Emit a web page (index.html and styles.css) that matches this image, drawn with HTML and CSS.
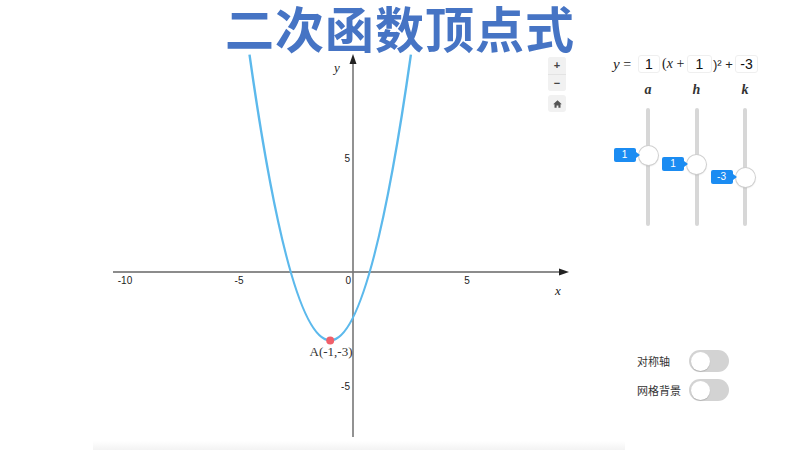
FILE: index.html
```html
<!DOCTYPE html>
<html lang="zh">
<head>
<meta charset="utf-8">
<title>二次函数顶点式</title>
<link rel="stylesheet" href="styles.css">
</head>
<body>
<h1 class="title">二次函数顶点式</h1>
<div class="main">
  <div class="graph">
    <svg class="plot" width="625" height="398" viewBox="0 0 625 398">
      <defs>
        <linearGradient id="strip" x1="0" y1="0" x2="0" y2="1">
          <stop offset="0" stop-color="#ffffff"/>
          <stop offset="1" stop-color="#f3f3f3"/>
        </linearGradient>
      </defs>
      <rect x="93" y="389" width="532" height="9" fill="url(#strip)"/>
      <!-- x axis -->
      <line x1="113" y1="220" x2="561" y2="220" stroke="#666" stroke-width="1.6"/>
      <polygon points="569,220 559,216.5 559,223.5" fill="#222"/>
      <!-- y axis -->
      <line x1="353" y1="385" x2="353" y2="10" stroke="#777" stroke-width="1.6"/>
      <polygon points="353,2 349.5,12 356.5,12" fill="#222"/>
      <!-- labels -->
      <g class="tick">
        <text x="125" y="232" text-anchor="middle">-10</text>
        <text x="239" y="232" text-anchor="middle">-5</text>
        <text x="351" y="232" text-anchor="end">0</text>
        <text x="467" y="232" text-anchor="middle">5</text>
        <text x="350" y="110" text-anchor="end">5</text>
        <text x="350" y="338" text-anchor="end">-5</text>
      </g>
      <text class="axisname" x="334" y="20">y</text>
      <text class="axisname" x="555" y="243">x</text>
      <!-- parabola y=(x+1)^2-3 -->
      <path d="M249.5 2.7 Q330.2 574 410.9 2.7" fill="none" stroke="#5cb9ec" stroke-width="2.4"/>
      <circle cx="330.2" cy="288.4" r="4" fill="#f0606a"/>
      <text class="ptlabel" x="331" y="304" text-anchor="middle">A(-1,-3)</text>
    </svg>
    <div class="zoom">
      <div class="zgroup">
        <div class="zbtn">+</div>
        <div class="zbtn minus">−</div>
      </div>
      <div class="zbtn home">
        <svg width="9" height="8" viewBox="0 0 9 8"><path d="M4.5 0.3 L0.2 4.2 H1.5 V7.8 H3.6 V5.5 H5.4 V7.8 H7.5 V4.2 H8.8 Z" fill="#555"/></svg>
      </div>
    </div>
  </div>
  <div class="panel">
    <div class="eq">
      <span class="ey"><i>y</i> =</span>
      <span class="box b1">1</span>
      <span class="paren">(<i>x</i> +</span>
      <span class="box b2">1</span>
      <span class="sq">)² +</span>
      <span class="box b3">-3</span>
    </div>
    <div class="sliders">
      <div class="col">
        <div class="pname">a</div>
        <div class="track"><div class="knob" style="top:47px"><span class="tag">1</span></div></div>
      </div>
      <div class="col">
        <div class="pname">h</div>
        <div class="track"><div class="knob" style="top:56px"><span class="tag">1</span></div></div>
      </div>
      <div class="col">
        <div class="pname">k</div>
        <div class="track"><div class="knob" style="top:69px"><span class="tag">-3</span></div></div>
      </div>
    </div>
    <div class="toggles">
      <div class="trow"><span class="tlabel">对称轴</span><span class="switch"><span class="sknob"></span></span></div>
      <div class="trow"><span class="tlabel">网格背景</span><span class="switch"><span class="sknob"></span></span></div>
    </div>
  </div>
</div>
</body>
</html>
```

FILE: styles.css
```css
* { box-sizing: border-box; }
html, body { margin: 0; padding: 0; background: #fff; }
body {
  width: 800px;
  height: 450px;
  overflow: hidden;
  font-family: "Liberation Sans", "Noto Sans CJK SC", sans-serif;
  color: #222;
}
.title {
  margin: 0;
  height: 52px;
  line-height: 52px;
  padding-top: 1px;
  text-align: center;
  font-family: "Noto Sans CJK SC", sans-serif;
  font-weight: 700;
  font-size: 49px;
  color: #4674c4;
  letter-spacing: 1px;
  overflow: visible;
}
.main {
  display: flex;
  height: 398px;
}
.graph {
  position: relative;
  width: 605px;
  height: 398px;
  flex: none;
}
.plot { display: block; overflow: visible; }
.tick text {
  font-family: "Liberation Sans", sans-serif;
  font-size: 10px;
  fill: #222;
}
.axisname {
  font-family: "Liberation Serif", serif;
  font-style: italic;
  font-size: 13px;
  fill: #222;
}
.ptlabel {
  font-family: "Liberation Serif", serif;
  font-size: 13px;
  fill: #333;
}
.zoom {
  position: absolute;
  left: 548px;
  top: 5px;
  display: flex;
  flex-direction: column;
  gap: 4px;
}
.zgroup {
  display: flex;
  flex-direction: column;
  border-radius: 3px;
  overflow: hidden;
  background: #f1f1f1;
}
.zbtn {
  width: 18px;
  height: 17px;
  display: flex;
  align-items: center;
  justify-content: center;
  background: #f1f1f1;
  color: #444;
  font-size: 11px;
  font-weight: 700;
  line-height: 1;
}
.zbtn.minus { border-top: 1px solid #e3e3e3; }
.zbtn.home { border-radius: 3px; }
.panel {
  width: 195px;
  flex: none;
  padding-top: 3px;
}
.eq {
  display: flex;
  align-items: center;
  height: 18px;
  padding-left: 8px;
  font-size: 14px;
}
.ey {
  font-family: "Liberation Serif", serif;
  font-size: 14px;
  width: 25px;
}
.ey i { font-size: 15px; }
.box {
  height: 18px;
  border: 1px solid #efefef;
  border-radius: 3px;
  background: #fff;
  display: flex;
  align-items: center;
  justify-content: center;
  font-family: "Liberation Sans", sans-serif;
  font-size: 14px;
  color: #111;
}
.b1 { width: 22px; }
.b2 { width: 25px; }
.b3 { width: 23px; }
.paren {
  font-family: "Liberation Serif", serif;
  font-size: 14px;
  width: 27px;
  padding-left: 2px;
}
.sq {
  font-family: "Liberation Sans", sans-serif;
  font-size: 13px;
  width: 23px;
  padding-left: 1px;
}
.sliders {
  display: grid;
  grid-template-columns: 50px 47px 50px;
  margin-left: 18px;
  margin-top: 9px;
}
.col {
  display: flex;
  flex-direction: column;
  align-items: center;
}
.pname {
  height: 16px;
  line-height: 16px;
  font-family: "Liberation Serif", serif;
  font-style: italic;
  font-weight: 700;
  font-size: 14px;
  color: #333;
  margin-bottom: 10px;
}
.track {
  position: relative;
  width: 4px;
  height: 118px;
  border-radius: 2px;
  background: #d7d7d7;
}
.knob {
  position: absolute;
  left: 50%;
  width: 19px;
  height: 19px;
  margin-left: -9.5px;
  margin-top: -9.5px;
  border-radius: 50%;
  background: #fff;
  box-shadow: 0 0 0 1px #d0d0d0, 0 1px 2px rgba(0,0,0,0.2);
}
.tag {
  position: absolute;
  right: 22px;
  top: 2.5px;
  width: 22px;
  height: 14px;
  border-radius: 2px;
  background: #1b8cf2;
  color: #fff;
  font-family: "Liberation Sans", sans-serif;
  font-size: 10px;
  line-height: 14px;
  text-align: center;
}
.tag::after {
  content: "";
  position: absolute;
  right: -4px;
  top: 3.5px;
  border-left: 4px solid #1b8cf2;
  border-top: 3.5px solid transparent;
  border-bottom: 3.5px solid transparent;
}
.toggles {
  margin-top: 124px;
  padding-left: 32px;
  display: flex;
  flex-direction: column;
  gap: 7px;
}
.trow {
  display: flex;
  align-items: center;
  height: 22px;
}
.tlabel {
  width: 52px;
  font-family: "Noto Sans CJK SC", sans-serif;
  font-size: 11px;
  color: #333;
}
.switch {
  position: relative;
  width: 40px;
  height: 22px;
  border-radius: 11px;
  background: #d3d3d3;
  display: flex;
  align-items: center;
  padding-left: 2px;
}
.sknob {
  width: 19px;
  height: 19px;
  border-radius: 50%;
  background: #fff;
  box-shadow: 0 1px 1px rgba(0,0,0,0.15);
}
```
